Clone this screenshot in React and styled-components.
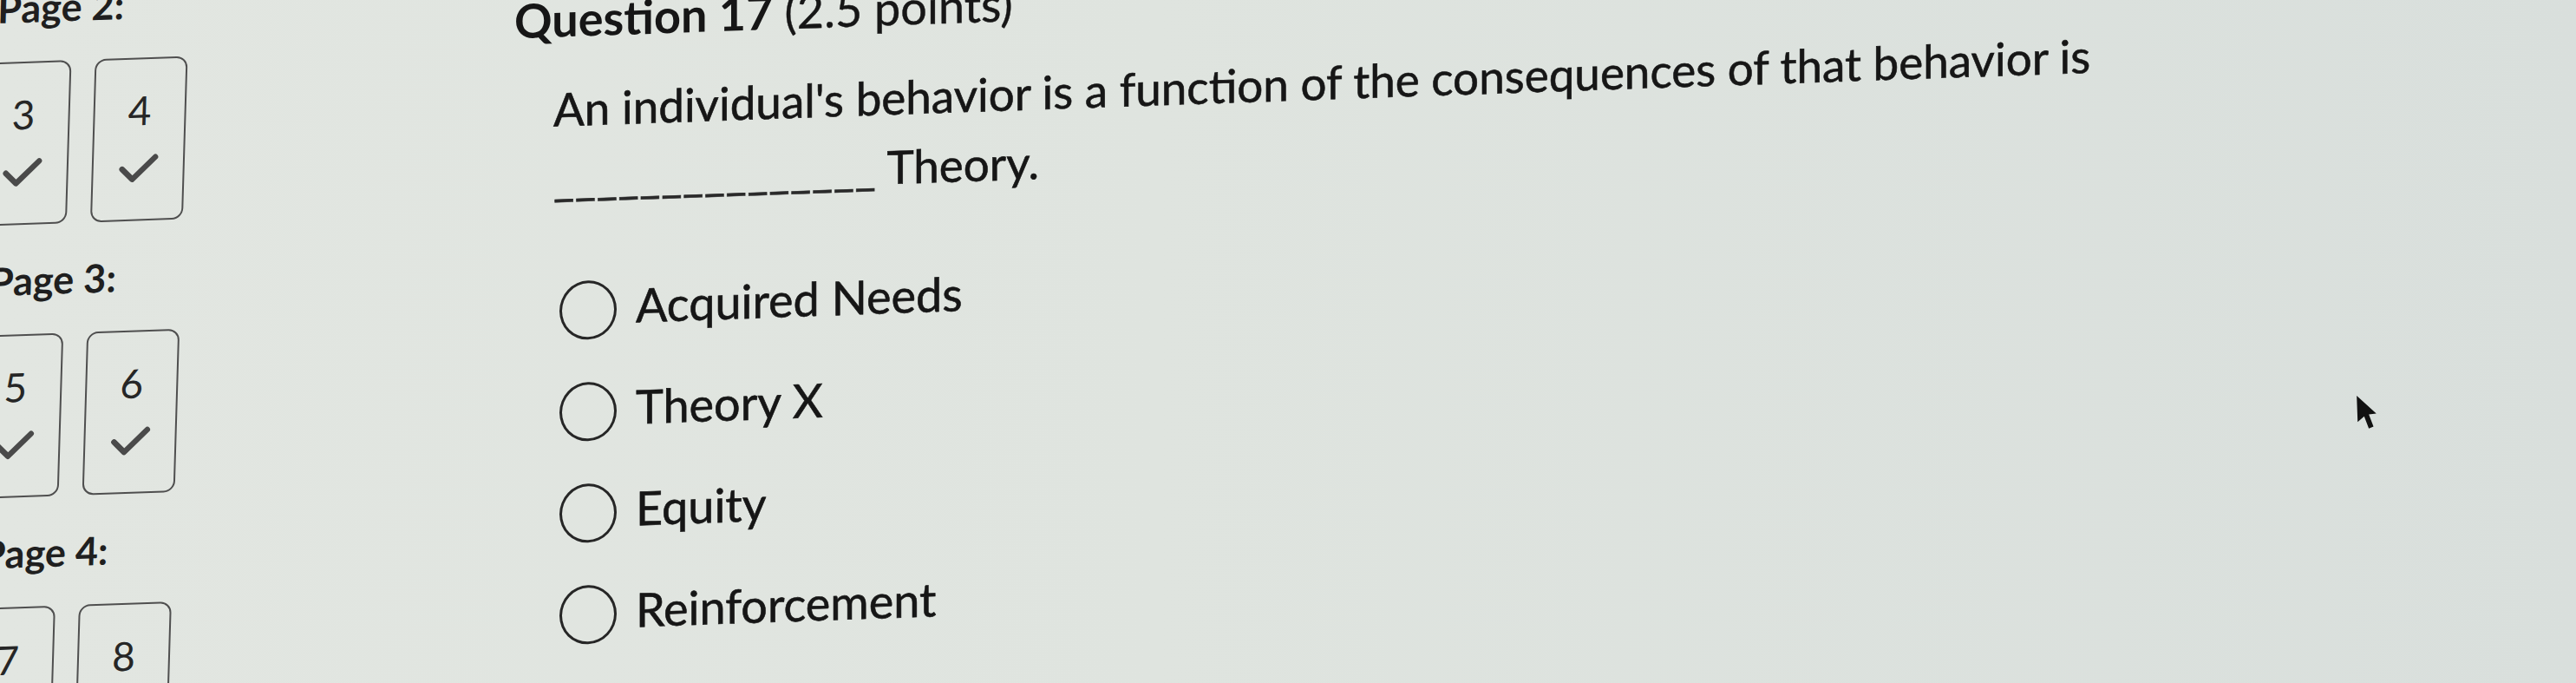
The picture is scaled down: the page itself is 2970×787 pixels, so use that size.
import React from "react";
import styled, { createGlobalStyle } from "styled-components";

const GlobalStyle = createGlobalStyle`
  html, body {
    margin: 0;
    padding: 0;
  }
  body {
    width: 2970px;
    height: 787px;
    overflow: hidden;
    background: linear-gradient(90deg, #e2e6e1 0%, #dfe4df 45%, #d9dfdc 100%);
    font-family: Lato, "Open Sans", sans-serif;
    color: #161616;
  }
`;

const Frame = styled.div`
  position: relative;
  width: 2970px;
  height: 787px;
  overflow: hidden;
`;

// the photo is taken at a slight angle, so the whole sheet leans up to the right
const Sheet = styled.div`
  display: flex;
  align-items: flex-start;
  transform: skewY(-2deg);
  transform-origin: 0 0;
`;

const Sidebar = styled.nav`
  flex: 0 0 615px;
  margin-left: -22px;
  margin-top: -12px;
  display: flex;
  flex-direction: column;
  gap: 42px;
  transform: skewX(-1.7deg);
  transform-origin: 0 0;
`;

const Section = styled.section`
  display: flex;
  flex-direction: column;
`;

const PageLabel = styled.div`
  font-size: 45px;
  font-weight: 700;
  line-height: 44px;
  padding-left: 20px;
  margin-bottom: 40px;
  color: #1f1f1f;
`;

const BoxRow = styled.div`
  display: flex;
  gap: 27px;
`;

const QBox = styled.div`
  box-sizing: border-box;
  width: 107px;
  height: 188px;
  border: 2px solid #4f4f4f;
  border-radius: 13px;
  display: flex;
  flex-direction: column;
  align-items: center;
  padding-top: 36px;
`;

const Num = styled.span`
  font-size: 46px;
  line-height: 46px;
  color: #262626;
`;

const CheckMark = styled.svg`
  margin-top: 26px;
  width: 48px;
  height: 36px;
`;

const Main = styled.main`
  display: flex;
  flex-direction: column;
  margin-top: 13px;
`;

const Title = styled.h2`
  margin: 0;
  font-size: 54px;
  line-height: 64px;
  font-weight: 700;
  white-space: nowrap;
  color: #161616;
`;

const Points = styled.span`
  font-weight: 400;
  -webkit-text-stroke: 0.4px currentColor;
`;

const Prompt = styled.p`
  margin: 31px 0 0 45px;
  font-size: 53px;
  line-height: 80px;
  white-space: nowrap;
  -webkit-text-stroke: 0.6px currentColor;
`;

const Blank = styled.span`
  letter-spacing: 0.5px;
  color: #2a2a2a;
`;

const Options = styled.ul`
  list-style: none;
  margin: 75px 0 0 52px;
  padding: 0;
  display: flex;
  flex-direction: column;
  gap: 41px;
`;

const Option = styled.li`
  display: flex;
  align-items: center;
  gap: 22px;
`;

const Radio = styled.span`
  box-sizing: border-box;
  width: 66px;
  height: 68px;
  border: 3px solid #262626;
  border-radius: 50%;
  flex: 0 0 auto;
`;

const OptionLabel = styled.span`
  font-size: 54px;
  line-height: 68px;
  padding-bottom: 8px;
  white-space: nowrap;
  -webkit-text-stroke: 0.6px currentColor;
`;

const Cursor = styled.svg`
  position: absolute;
  left: 2716px;
  top: 455px;
  width: 26px;
  height: 43px;
`;

const pages = [
  { label: "Page 2:", items: [3, 4] },
  { label: "Page 3:", items: [5, 6] },
  { label: "Page 4:", items: [7, 8] },
];

const options = ["Acquired Needs", "Theory X", "Equity", "Reinforcement"];

const Check = () => (
  <CheckMark viewBox="0 0 48 36">
    <path
      d="M5 18 L17 30 L43 5"
      fill="none"
      stroke="#4a4a4a"
      strokeWidth="6.5"
      strokeLinecap="round"
      strokeLinejoin="round"
    />
  </CheckMark>
);

export default function App() {
  return (
    <>
      <GlobalStyle />
      <Frame>
        <Sheet>
          <Sidebar>
            {pages.map((p) => (
              <Section key={p.label}>
                <PageLabel>{p.label}</PageLabel>
                <BoxRow>
                  {p.items.map((n) => (
                    <QBox key={n}>
                      <Num>{n}</Num>
                      {n < 7 && <Check />}
                    </QBox>
                  ))}
                </BoxRow>
              </Section>
            ))}
          </Sidebar>
          <Main>
            <Title>
              Question 17 <Points>(2.5 points)</Points>
            </Title>
            <Prompt>
              An individual's behavior is a function of the consequences of that behavior is
              <br />
              <Blank>_______________</Blank> Theory.
            </Prompt>
            <Options>
              {options.map((o) => (
                <Option key={o}>
                  <Radio />
                  <OptionLabel>{o}</OptionLabel>
                </Option>
              ))}
            </Options>
          </Main>
        </Sheet>
        <Cursor viewBox="0 0 24 40">
          <path d="M1 1 L2 29 L9 23 L14 36 L19 34 L14 21 L22 20 Z" fill="#111" />
        </Cursor>
      </Frame>
    </>
  );
}
